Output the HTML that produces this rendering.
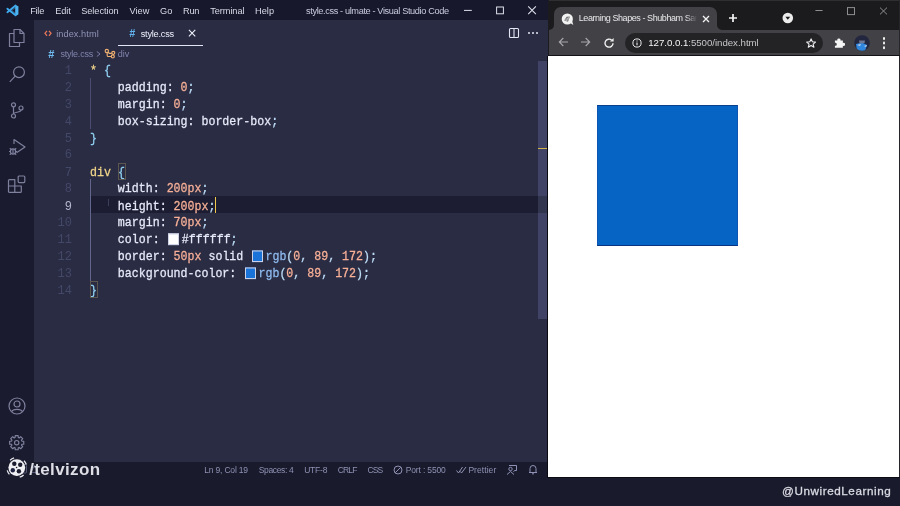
<!DOCTYPE html>
<html>
<head>
<meta charset="utf-8">
<style>
*{margin:0;padding:0;box-sizing:border-box;}
html,body{width:900px;height:506px;overflow:hidden;background:#191a2c;}
body{filter:blur(0.45px);position:relative;font-family:"Liberation Sans",sans-serif;}
.abs{position:absolute;}
.t{position:absolute;white-space:nowrap;line-height:1;}
/* vscode */
#titlebar{left:0;top:0;width:548px;height:20.4px;background:#17182b;}
#actbar{left:0;top:20.4px;width:33.8px;height:441.6px;background:#1a1b2f;}
#editor{left:33.8px;top:20.4px;width:514.2px;height:441.6px;background:#2a2c44;}
#status{left:0;top:462px;width:548px;height:44px;background:#191a2c;}
.menu{font-size:9.2px;color:#d9dbe8;top:7px;}
.st{font-size:8.5px;color:#8f92b4;top:466.2px;}
.code{transform:translateY(1px) scaleY(1.06);transform-origin:0 12.500px;position:absolute;left:90px;font-family:"Liberation Mono",monospace;font-size:11.62px;line-height:17px;white-space:pre;color:#e6e9f8;height:17px;-webkit-text-stroke:0.25px currentColor;}
.ln{transform:translateY(1.800px) scaleY(1.06);transform-origin:0 12.500px;position:absolute;left:40px;width:32px;text-align:right;font-family:"Liberation Mono",monospace;font-size:12px;line-height:17px;color:#444867;height:17px;}
.sel{color:#f1d58a;}
.num{color:#f8b097;}.p{color:#bcdcf5;}
.fn{color:#8fbcf0;}
.br{color:#8fd0f0;}
.sw{display:inline-block;width:10.600px;height:10.400px;border:1px solid #cfd3e8;margin:0 2.800px 0 1.800px;vertical-align:-1.500px;}
/* browser */
#bstrip{left:548px;top:0;width:352px;height:30px;background:#1b1b1d;}
#btool{left:548px;top:30px;width:352px;height:25.5px;background:#424146;}
#bpage{left:548px;top:56px;width:351px;height:421.3px;background:#fff;}
</style>
</head>
<body>
<!-- VS Code -->
<div class="abs" id="titlebar"></div>
<div class="abs" id="actbar"></div>
<div class="abs" id="editor"></div>
<div class="abs" id="status"></div>

<!-- title bar -->
<svg class="abs" style="left:0;top:0" width="24" height="20" viewBox="0 0 24 20"><path d="M15.200 5 L18.400 6.300 V14.600 L15.200 15.900 V13.200 L11.500 10.450 L15.200 7.700Z" fill="#4db2f0"/><path d="M15.600 5.600 L7.400 12.200 M15.600 15.300 L7.400 8.700" stroke="#3fa9ee" stroke-width="1.900" stroke-linecap="round" fill="none"/><path d="M15.200 8 L12 10.450 L15.200 12.900Z" fill="#17182b"/></svg>
<div class="t menu" style="left:30.2px;letter-spacing:-0.25px">File</div>
<div class="t menu" style="left:55.3px;letter-spacing:-0.09px">Edit</div>
<div class="t menu" style="left:81.2px;letter-spacing:-0.05px">Selection</div>
<div class="t menu" style="left:129.6px">View</div>
<div class="t menu" style="left:160px">Go</div>
<div class="t menu" style="left:183px;letter-spacing:-0.25px">Run</div>
<div class="t menu" style="left:210.3px;letter-spacing:-0.08px">Terminal</div>
<div class="t menu" style="left:255px;letter-spacing:0.05px">Help</div>
<div class="t" style="left:306px;top:7px;font-size:9.2px;letter-spacing:-0.37px;color:#c9ccde;">style.css - ulmate - Visual Studio Code</div>
<svg class="abs" style="left:460px;top:3px" width="84" height="14" viewBox="0 0 84 14" fill="none" stroke="#dfe1ee" stroke-width="1"><path d="M4 7.400H11.800"/><rect x="36.600" y="4" width="6.800" height="6.800"/><path d="M68.200 3.300 L75.900 11.100 M75.900 3.300 L68.200 11.100" stroke-width="1.100"/></svg>

<!-- tabs -->
<svg class="abs" style="left:43.5px;top:30.400px" width="8" height="6.600" viewBox="0 0 9 8" fill="none" stroke="#e8765a" stroke-width="1.500"><path d="M3.3 1 L0.8 4 L3.3 7 M5.7 1 L8.2 4 L5.7 7"/></svg>
<div class="t" style="left:56.2px;top:30px;font-size:9.2px;letter-spacing:0.07px;color:#9093b4;">index.html</div>
<div class="t" style="left:129.2px;top:28px;font-size:10.500px;color:#62b4ee;font-weight:bold;font-style:italic;">#</div>
<div class="t" style="left:140.7px;top:30px;font-size:9.2px;letter-spacing:-0.22px;color:#eef0fa;">style.css</div>
<svg class="abs" style="left:188.300px;top:28.900px" width="8.200" height="8.200" viewBox="0 0 9 9" stroke="#f0f2fb" stroke-width="1.2"><path d="M1 1 L8 8 M8 1 L1 8"/></svg>
<div class="abs" style="left:118px;top:44.5px;width:85px;height:1px;background:#dfe6f6;"></div>
<svg class="abs" style="left:508px;top:27px" width="12" height="12" viewBox="0 0 12 12" fill="none" stroke="#e4e6f2" stroke-width="1.1"><rect x="1.5" y="1.5" width="9" height="9" rx="1"/><path d="M6 1.5V10.5"/></svg>
<div class="abs" style="left:528px;top:31.9px;width:2px;height:2px;background:#e4e6f2;border-radius:1px;box-shadow:4px 0 #e4e6f2,8px 0 #e4e6f2;"></div>

<!-- breadcrumb -->
<div class="t" style="left:48.2px;top:49px;font-size:11px;color:#6fbcf0;font-weight:bold;">#</div>
<div class="t" style="left:60.4px;top:49.9px;font-size:9px;letter-spacing:-0.21px;color:#8285ac;">style.css</div>
<svg class="abs" style="left:96.300px;top:51.400px" width="5" height="6" viewBox="0 0 5 6" fill="none" stroke="#8285ac" stroke-width="0.900"><path d="M0.800 0.500 L4 3 L0.800 5.500"/></svg>
<svg class="abs" style="left:104px;top:47px" width="13" height="13" viewBox="104 47 13 13" fill="none" stroke="#eeb070" stroke-width="1.150" stroke-linejoin="round"><circle cx="106.800" cy="51" r="1.650"/><circle cx="113.300" cy="52.800" r="1.500"/><circle cx="112.800" cy="56.400" r="1.500"/><path d="M108 52.300 L109.200 53.300 H111.800 M107.200 52.700 V55.400 Q107.200 56.500 108.400 56.500 H111.300"/></svg>
<div class="t" style="left:117.8px;top:49.9px;font-size:9px;color:#8285ac;">div</div>

<!-- activity bar icons -->
<svg class="abs" style="left:7px;top:27px" width="20" height="22" viewBox="0 0 20 22" fill="none" stroke="#7e809d" stroke-width="1.2" stroke-linejoin="round"><path d="M7 2.5H13L17 6.5V15.5H7Z"/><path d="M13 2.5V6.5H17"/><path d="M7 6.5H2.5V19.5H12.5V15.5"/></svg>
<svg class="abs" style="left:7px;top:63px" width="20" height="22" viewBox="0 0 20 22" fill="none" stroke="#7e809d" stroke-width="1.2"><circle cx="12" cy="9.200" r="5.400"/><path d="M8.200 13.200 L2.800 18.800"/></svg>
<svg class="abs" style="left:7px;top:99px" width="20" height="22" viewBox="0 0 20 22" fill="none" stroke="#7e809d" stroke-width="1.2"><circle cx="6.5" cy="5.800" r="2"/><circle cx="6.5" cy="17" r="2"/><circle cx="14" cy="9" r="2"/><path d="M6.5 7.800V15 M14 11C14 14 6.5 12.5 6.5 15"/></svg>
<svg class="abs" style="left:6px;top:136px" width="22" height="22" viewBox="0 0 22 22" fill="none" stroke="#7e809d" stroke-width="1.2" stroke-linejoin="round"><path d="M8 8V3.5L19 11L10.5 16.8"/><circle cx="7" cy="15.5" r="2.6"/><path d="M7 12.9V18.1 M3 15.5H4.4 M9.6 15.5H11 M3.8 12.3L5.2 13.6 M10.2 12.3L8.8 13.6 M3.8 18.7L5.2 17.4 M10.2 18.7L8.8 17.4"/></svg>
<svg class="abs" style="left:7px;top:174px" width="20" height="20" viewBox="0 0 20 20" fill="none" stroke="#7e809d" stroke-width="1.2"><path d="M2.500 5.600H7.800V12H14.300V17.400Q14.300 18.400 13.300 18.400H2.500Q1.500 18.400 1.500 17.400V6.600Q1.500 5.600 2.500 5.600Z M7.800 12V18.400 M1.500 12H7.800" stroke-linejoin="round"/><rect x="11.200" y="2" width="6.600" height="6.600" rx="1"/></svg>
<svg class="abs" style="left:7px;top:396px" width="20" height="20" viewBox="0 0 20 20" fill="none" stroke="#7e809d" stroke-width="1.2"><circle cx="10" cy="10" r="8"/><circle cx="10" cy="8" r="3"/><path d="M4.5 15.8C6 12.5 14 12.5 15.5 15.8"/></svg>
<svg class="abs" style="left:8.200px;top:433.800px" width="17.400" height="17.400" viewBox="0 0 20 20" fill="none" stroke="#7e809d" stroke-width="1.350" stroke-linejoin="round"><circle cx="10" cy="10" r="2.500"/><path d="M15.92 8.17 L18.13 8.35 L18.13 11.65 L15.92 11.83 L15.48 12.89 L16.92 14.59 L14.59 16.92 L12.89 15.48 L11.83 15.92 L11.65 18.13 L8.35 18.13 L8.17 15.92 L7.11 15.48 L5.41 16.92 L3.08 14.59 L4.52 12.89 L4.08 11.83 L1.87 11.65 L1.87 8.35 L4.08 8.17 L4.52 7.11 L3.08 5.41 L5.41 3.08 L7.11 4.52 L8.17 4.08 L8.35 1.87 L11.65 1.87 L11.83 4.08 L12.89 4.52 L14.59 3.08 L16.92 5.41 L15.48 7.11Z"/></svg>

<!-- editor: current line highlight -->
<div class="abs" style="left:90px;top:196.3px;width:448.2px;height:16.300px;background:#1c1d32;"></div>
<!-- indent guides -->
<div class="abs" style="left:90px;top:78px;width:1.2px;height:51px;background:#4b4d70;"></div>
<div class="abs" style="left:90px;top:179px;width:1.2px;height:102px;background:#62658c;"></div>
<!-- scrollbar -->
<div class="abs" style="left:538.2px;top:61px;width:9.3px;height:258px;background:#414366;"></div>
<div class="abs" style="left:538.2px;top:196.3px;width:9.3px;height:16.300px;background:#32354e;"></div>
<div class="abs" style="left:538.2px;top:147.8px;width:9.3px;height:1.6px;background:#d4b44a;"></div>

<!-- line numbers -->
<div class="ln" style="top:61px">1</div>
<div class="ln" style="top:78px">2</div>
<div class="ln" style="top:95px">3</div>
<div class="ln" style="top:112px">4</div>
<div class="ln" style="top:129px">5</div>
<div class="ln" style="top:145px">6</div>
<div class="ln" style="top:163px">7</div>
<div class="ln" style="top:179px">8</div>
<div class="ln" style="top:197px;color:#b4b7cf">9</div>
<div class="ln" style="top:213px">10</div>
<div class="ln" style="top:230px">11</div>
<div class="ln" style="top:247px">12</div>
<div class="ln" style="top:264px">13</div>
<div class="ln" style="top:281px">14</div>

<!-- code -->
<div class="code" style="top:61px"><span class="sel">*</span> <span class="br">{</span></div>
<div class="code" style="top:78px">    padding: <span class="num">0</span><span class="p">;</span></div>
<div class="code" style="top:95px">    margin: <span class="num">0</span><span class="p">;</span></div>
<div class="code" style="top:112px">    box-sizing: border-box<span class="p">;</span></div>
<div class="code" style="top:129px"><span class="br">}</span></div>
<div class="code" style="top:163px"><span class="sel">div</span> <span class="br">{</span></div>
<div class="code" style="top:179px">    width: <span class="num">200px</span><span class="p">;</span></div>
<div class="code" style="top:197px">    height: <span class="num">200px</span><span class="p">;</span></div>
<div class="code" style="top:213px">    margin: <span class="num">70px</span><span class="p">;</span></div>
<div class="code" style="top:230px">    color: <span class="sw" style="background:#fff"></span>#ffffff<span class="p">;</span></div>
<div class="code" style="top:247px">    border: <span class="num">50px</span> solid <span class="sw" style="background:#1a73d8"></span><span class="fn">rgb</span><span class="p">(</span><span class="num">0</span><span class="p">,</span> <span class="num">89</span><span class="p">,</span> <span class="num">172</span><span class="p">)</span><span class="p">;</span></div>
<div class="code" style="top:264px">    background-color: <span class="sw" style="background:#1a73d8"></span><span class="fn">rgb</span><span class="p">(</span><span class="num">0</span><span class="p">,</span> <span class="num">89</span><span class="p">,</span> <span class="num">172</span><span class="p">)</span><span class="p">;</span></div>
<div class="code" style="top:281px"><span class="br">}</span></div>
<div class="abs" style="left:118px;top:162.5px;width:7.5px;height:17px;border:1px solid #5d564f;"></div>
<div class="abs" style="left:90px;top:280.5px;width:7.5px;height:17px;border:1px solid #5d564f;"></div>
<div class="abs" style="left:107.6px;top:199px;width:1.3px;height:7px;background:#3c3f5a;"></div>
<!-- cursor -->
<div class="abs" style="left:214.500px;top:196.500px;width:1.300px;height:16.200px;background:#f2c84b;"></div>

<!-- status bar -->
<div class="t st" style="left:204.3px;letter-spacing:-0.19px">Ln 9, Col 19</div>
<div class="t st" style="left:258.8px;letter-spacing:-0.36px">Spaces: 4</div>
<div class="t st" style="left:304.2px;letter-spacing:-0.22px">UTF-8</div>
<div class="t st" style="left:337.8px;letter-spacing:-0.85px">CRLF</div>
<div class="t st" style="left:367.5px;letter-spacing:-0.96px">CSS</div>
<svg class="abs" style="left:393px;top:465px" width="10" height="10" viewBox="0 0 10 10" fill="none" stroke="#8f92b4" stroke-width="1"><circle cx="5" cy="5" r="4"/><path d="M2.200 7.800 L7.800 2.200"/></svg>
<div class="t st" style="left:405.7px;letter-spacing:-0.15px">Port : 5500</div>
<svg class="abs" style="left:456px;top:466px" width="11" height="8" viewBox="0 0 11 8" fill="none" stroke="#8f92b4" stroke-width="1"><path d="M0.500 4.500 L2.500 7 L6.500 1 M4.500 5.500 L5.500 7 L10 1"/></svg>
<div class="t st" style="left:468.4px;letter-spacing:0.06px">Prettier</div>
<svg class="abs" style="left:506px;top:464px" width="12" height="11" viewBox="0 0 12 11" fill="none" stroke="#8f92b4" stroke-width="1"><path d="M3 1.500 H10.500 V6.500 H8.500 L7.500 7.800"/><circle cx="4.500" cy="5" r="1.700"/><path d="M1 10.500 L4.500 7.500 L8 10.500"/></svg>
<svg class="abs" style="left:528px;top:464px" width="10" height="11" viewBox="0 0 10 11" fill="none" stroke="#8f92b4" stroke-width="1"><path d="M1 8.500 H9 M2 8.500 V4.500 A3 3 0 0 1 8 4.500 V8.500 M4 9.500 Q5 10.800 6 9.500"/></svg>

<svg class="abs" style="left:20px;top:464px" width="20" height="11" viewBox="0 0 20 11" fill="none" stroke="#5d6080" stroke-width="0.900"><rect x="3" y="0.500" width="3.500" height="8.500" rx="1"/><path d="M14.500 1.500 L18 8.500 H11Z"/></svg>
<!-- telvizon watermark -->
<svg class="abs" style="left:4px;top:455px" width="30" height="26" viewBox="4 455 30 26"><circle cx="16.800" cy="467.600" r="8.400" fill="#efeff3"/><circle cx="16.800" cy="467.600" r="10" fill="none" stroke="#e6e6ec" stroke-width="1.300" stroke-dasharray="4.500 11.208" transform="rotate(-43.500 16.800 467.600)"/><circle cx="14.300" cy="463.800" r="2.200" fill="#1a1b2e"/><circle cx="20.200" cy="464.800" r="2.200" fill="#1a1b2e"/><circle cx="12.800" cy="470.200" r="2.200" fill="#1f2240"/><circle cx="18.900" cy="471.200" r="2.200" fill="#1a1b2e"/><circle cx="16.600" cy="467.500" r="0.800" fill="#1a1b2e"/></svg>
<div class="t" style="left:29.2px;top:460.9px;font-size:17px;font-weight:bold;color:#dedfe6;letter-spacing:0.36px;">/telvizon</div>
<div class="t" style="left:782px;top:485.4px;font-size:11.7px;color:#d9dae2;letter-spacing:0.57px;-webkit-text-stroke:0.3px #d9dae2;">@UnwiredLearning</div>

<!-- Browser -->
<div class="abs" id="bstrip"></div>
<div class="abs" id="btool"></div>
<div class="abs" id="bpage"></div>
<div class="abs" style="left:548px;top:0;width:352px;height:1px;background:#2f2f31;"></div>
<div class="abs" style="left:547.4px;top:56px;width:1.1px;height:422px;background:#0a0a12;"></div>
<div class="abs" style="left:548px;top:0;width:1px;height:55px;background:#1c1c20;"></div>
<div class="abs" style="left:899px;top:0;width:1px;height:478px;background:#26262a;"></div>
<div class="abs" style="left:548px;top:54.9px;width:352px;height:1.2px;background:#131315;"></div>
<div class="abs" style="left:548px;top:477.2px;width:352px;height:1px;background:#0c0c14;"></div>
<!-- tab -->
<div class="abs" style="left:554px;top:6.5px;width:163px;height:23.5px;background:#424146;border-radius:7px 7px 0 0;"></div>
<svg class="abs" style="left:549px;top:25px" width="5" height="5" viewBox="0 0 5 5"><path d="M5 0 V5 H0 A5 5 0 0 0 5 0Z" fill="#424146"/></svg>
<svg class="abs" style="left:717px;top:25px" width="5" height="5" viewBox="0 0 5 5"><path d="M0 0 V5 H5 A5 5 0 0 1 0 0Z" fill="#424146"/></svg>
<svg class="abs" style="left:561px;top:12.5px" width="13" height="13" viewBox="0 0 13 13"><circle cx="6.3" cy="6" r="5.600" fill="#f2f2f2"/><path d="M8.500 9.500 L12.300 12 L11 7.500Z" fill="#f2f2f2"/><path d="M3.200 7.600 L5.500 3.800 L9 3.500 L7 8.800Z" fill="#77777b"/><path d="M4 7.300 L8.300 4.200 M4.800 8 L8.600 5.300" stroke="#f2f2f2" stroke-width="0.500"/></svg>
<div class="t" style="left:578.8px;top:13.9px;font-size:9px;letter-spacing:-0.43px;color:#e8e8ea;width:118px;overflow:hidden;">Learning Shapes - Shubham Sarda</div>
<div class="abs" style="left:686px;top:10px;width:11px;height:16px;background:linear-gradient(90deg,rgba(66,65,70,0),#424146);"></div>
<svg class="abs" style="left:702px;top:14.5px" width="8" height="8" viewBox="0 0 8 8" stroke="#f4f4f4" stroke-width="1.300"><path d="M1 1 L7 7 M7 1 L1 7"/></svg>
<svg class="abs" style="left:728px;top:13.4px" width="10" height="10" viewBox="0 0 10 10" stroke="#f4f4f4" stroke-width="1.700"><path d="M5 1 V9 M1 5 H9"/></svg>
<svg class="abs" style="left:782px;top:12.200px" width="12" height="12" viewBox="0 0 12 12"><circle cx="5.800" cy="6" r="5.300" fill="#ececec"/><path d="M3.400 4.800 H8.200 L5.800 7.700Z" fill="#1b1b1d"/></svg>
<svg class="abs" style="left:812px;top:4px" width="80" height="14" viewBox="0 0 80 14" fill="none" stroke="#8e8e92" stroke-width="1"><path d="M3.400 6.500 H10.600"/><rect x="35.500" y="3.600" width="7" height="7"/><path d="M68 3.600 L75 10.400 M75 3.600 L68 10.400"/></svg>
<!-- toolbar -->
<svg class="abs" style="left:558px;top:37.3px" width="11" height="10" viewBox="0 0 11 10" fill="none" stroke="#a8a8ac" stroke-width="1.100"><path d="M10 5 H1.500 M5.300 1 L1.300 5 L5.300 9"/></svg>
<svg class="abs" style="left:580px;top:37.3px" width="11" height="10" viewBox="0 0 11 10" fill="none" stroke="#a8a8ac" stroke-width="1.100"><path d="M1 5 H9.500 M5.700 1 L9.700 5 L5.700 9"/></svg>
<svg class="abs" style="left:602.500px;top:36.500px" width="12" height="12" viewBox="0 0 12 12" fill="none" stroke="#f0f0f0" stroke-width="1.400"><path d="M10 6.200 A4 4 0 1 1 8.700 3.200"/><path d="M10.600 1 V4.600 H7Z" fill="#f0f0f0" stroke="none"/></svg>
<div class="abs" style="left:625px;top:33px;width:198px;height:19.500px;border-radius:10px;background:#232326;"></div>
<svg class="abs" style="left:631.500px;top:38.100px" width="10" height="10" viewBox="0 0 10 10" fill="none" stroke="#ededed" stroke-width="1"><circle cx="5" cy="5" r="4.100"/><path d="M5 4.400 V7.300 M5 2.500 V3.500" stroke-width="1.100"/></svg>
<div class="t" style="left:648.2px;top:38.2px;font-size:9.7px;letter-spacing:-0.04px;color:#f4f4f4;">127.0.0.1<span style="color:#c6c6ca">:5500/index.html</span></div>
<svg class="abs" style="left:806px;top:38.300px" width="10.200" height="10.200" viewBox="0 0 12 12" fill="none" stroke="#f0f0f0" stroke-width="1.300" stroke-linejoin="round"><path d="M6 1 L7.500 4.500 L11.200 4.800 L8.400 7.200 L9.300 10.900 L6 8.900 L2.700 10.900 L3.600 7.200 L0.800 4.800 L4.500 4.500Z"/></svg>
<svg class="abs" style="left:833.600px;top:37px" width="11.200" height="11.200" viewBox="0 0 12 12"><path d="M1 3.800 H3.600 A1.700 1.700 0 1 1 6.900 3.800 H9.500 V6.400 A1.700 1.700 0 1 1 9.500 9.500 V11.500 H1 V9.300 A1.600 1.600 0 1 0 1 6.200Z" fill="#f6f6f6"/></svg>
<svg class="abs" style="left:854px;top:35px" width="16" height="16" viewBox="0 0 16 16"><defs><clipPath id="av"><circle cx="8" cy="8" r="7.800"/></clipPath></defs><g clip-path="url(#av)"><rect width="16" height="16" fill="#23263f"/><path d="M2 9 L8 7.500 L13 10 L11 16 L3 16Z" fill="#2f86dc"/><path d="M5 5.500 H11 L10.500 8 L5.500 8.500Z" fill="#6f7693"/><path d="M3 10 L7 9 L6 11Z M10 11 l3 -1 l-1 2Z" fill="#c9d6ee"/></g></svg>
<div class="abs" style="left:883px;top:37.400px;width:2.200px;height:2.200px;background:#f0f0f0;border-radius:50%;box-shadow:0 4.600px #f0f0f0,0 9.200px #f0f0f0;"></div>
<!-- page -->
<div class="abs" style="left:597.1px;top:105.3px;width:140.9px;height:140.5px;background:#0665c4;border:1px solid #0d55b0;border-top-color:#0a3f8e;border-bottom-color:#0b3280;"></div>
</body>
</html>
